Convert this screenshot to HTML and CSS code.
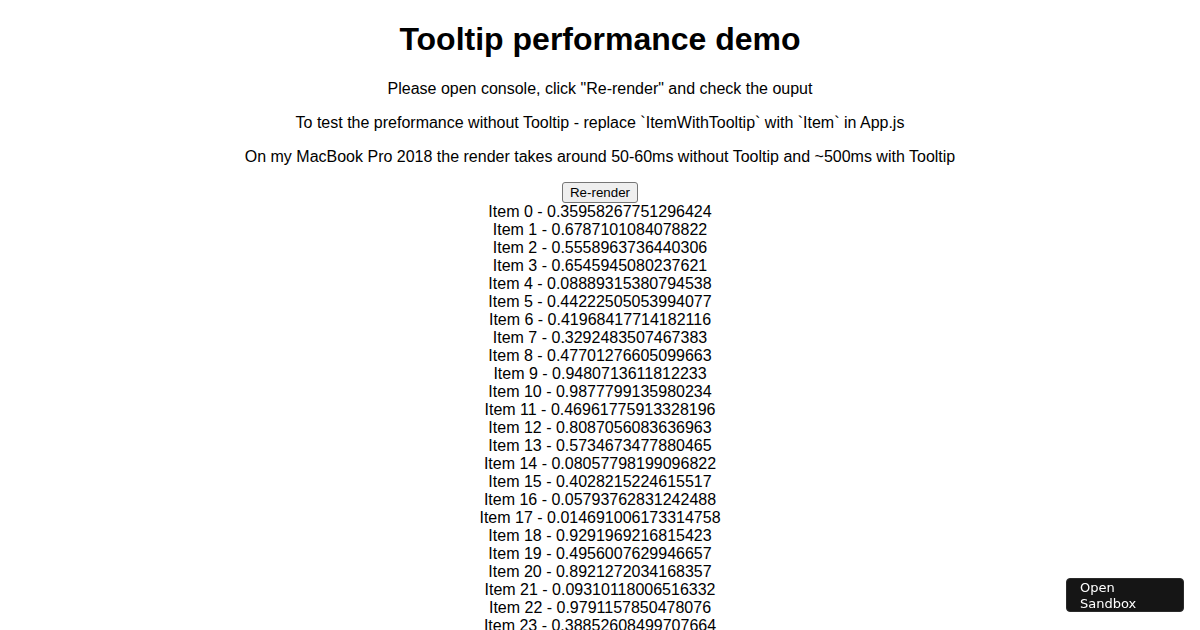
FILE: index.html
```html
<!DOCTYPE html>
<html>
<head>
<meta charset="utf-8">
<link rel="stylesheet" href="styles.css">
</head>
<body>
<div class="app">
  <h1 class="title">Tooltip performance demo</h1>
  <p class="note">Please open console, click "Re-render" and check the ouput</p>
  <p class="note">To test the preformance without Tooltip - replace `ItemWithTooltip` with `Item` in App.js</p>
  <p class="note">On my MacBook Pro 2018 the render takes around 50-60ms without Tooltip and ~500ms with Tooltip</p>
  <div class="controls"><button class="btn">Re-render</button></div>
  <div class="list">
    <div class="item">Item 0 - 0.35958267751296424</div>
    <div class="item">Item 1 - 0.6787101084078822</div>
    <div class="item">Item 2 - 0.5558963736440306</div>
    <div class="item">Item 3 - 0.6545945080237621</div>
    <div class="item">Item 4 - 0.08889315380794538</div>
    <div class="item">Item 5 - 0.44222505053994077</div>
    <div class="item">Item 6 - 0.41968417714182116</div>
    <div class="item">Item 7 - 0.3292483507467383</div>
    <div class="item">Item 8 - 0.47701276605099663</div>
    <div class="item">Item 9 - 0.9480713611812233</div>
    <div class="item">Item 10 - 0.9877799135980234</div>
    <div class="item">Item 11 - 0.46961775913328196</div>
    <div class="item">Item 12 - 0.8087056083636963</div>
    <div class="item">Item 13 - 0.5734673477880465</div>
    <div class="item">Item 14 - 0.08057798199096822</div>
    <div class="item">Item 15 - 0.4028215224615517</div>
    <div class="item">Item 16 - 0.05793762831242488</div>
    <div class="item">Item 17 - 0.014691006173314758</div>
    <div class="item">Item 18 - 0.9291969216815423</div>
    <div class="item">Item 19 - 0.4956007629946657</div>
    <div class="item">Item 20 - 0.8921272034168357</div>
    <div class="item">Item 21 - 0.09310118006516332</div>
    <div class="item">Item 22 - 0.9791157850478076</div>
    <div class="item">Item 23 - 0.38852608499707664</div>
  </div>
</div>
<a class="sandbox-badge">Open Sandbox</a>
</body>
</html>
```
FILE: styles.css
```css
html {
  overflow: hidden;
}
body {
  margin: 0 8px;
  font-family: "Liberation Sans", Arial, sans-serif;
  color: #000;
  background: #fff;
}
.app {
  text-align: center;
}
.title {
  font-size: 32px;
  font-weight: bold;
  margin: 21.44px 0;
}
.note {
  font-size: 16px;
  margin: 16px 0;
}
.controls {
  line-height: 0;
  height: 21px;
}
.btn {
  font-family: "Liberation Sans", Arial, sans-serif;
  font-size: 13.33px;
  line-height: 15px;
  padding: 2px 7px;
  border: 1px solid #767676;
  border-radius: 3px;
  background: #efefef;
  color: #000;
}
.item {
  font-size: 16px;
  line-height: 18px;
}
.sandbox-badge {
  position: fixed;
  right: 16px;
  bottom: 18px;
  width: 118px;
  height: 34px;
  box-sizing: border-box;
  padding: 1px 40px 0 13px;
  background: #151515;
  border: 1px solid #2a2a2a;
  border-radius: 4px;
  color: #fff;
  font-family: "DejaVu Sans", sans-serif;
  font-size: 13px;
  line-height: 16px;
  text-align: left;
}
```
